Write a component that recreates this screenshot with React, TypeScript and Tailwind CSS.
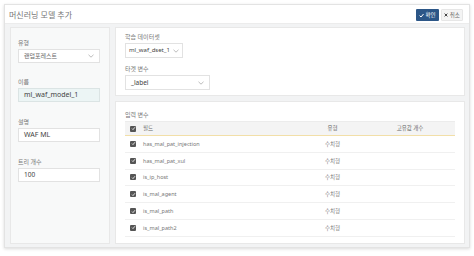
import React from "react";

const font = { fontFamily: '"Noto Sans", "Noto Sans CJK KR", sans-serif' };

function Chevron() {
  return (
    <svg width="6" height="4" viewBox="0 0 6 4" className="shrink-0">
      <path d="M0.5 0.8 L3 3.2 L5.5 0.8" fill="none" stroke="#aaa" strokeWidth="0.8" />
    </svg>
  );
}

function Check() {
  return (
    <div className="w-[6px] h-[6px] bg-[#555] rounded-[1px] flex items-center justify-center">
      <svg width="5" height="5" viewBox="0 0 5 5">
        <path d="M1 2.6 L2 3.6 L4 1.2" fill="none" stroke="#fff" strokeWidth="0.8" />
      </svg>
    </div>
  );
}

function Label({ children }: { children: React.ReactNode }) {
  return <div className="text-[6px] leading-[8px] text-[#777] mb-[2px]">{children}</div>;
}

const rows = [
  "has_mal_pat_injection",
  "has_mal_pat_xul",
  "is_ip_host",
  "is_mal_agent",
  "is_mal_path",
  "is_mal_path2",
];

export default function App() {
  return (
    <div className="w-[474px] h-[256px] bg-white pt-[4px] px-[4px]" style={font}>
      <div className="h-[244px] border border-[#e3e3e3] shadow-[0_1px_3px_rgba(0,0,0,0.15)] flex flex-col bg-white">
        <div className="h-[19px] flex items-center justify-between pl-[4px] pr-[6px] border-b border-[#ececec]">
          <div className="text-[8px] text-[#777] leading-none mt-[1px]">머신러닝 모델 추가</div>
          <div className="flex gap-[2px] items-center mt-[2px]">
            <div className="h-[12px] w-[23px] bg-[#2c5687] rounded-[1px] flex items-center justify-center gap-[1px] text-white text-[5.5px]">
              <svg width="5" height="5" viewBox="0 0 5 5">
                <path d="M0.6 2.6 L2 4 L4.5 1" fill="none" stroke="#fff" strokeWidth="1" />
              </svg>
              <span>확인</span>
            </div>
            <div className="h-[12px] w-[22px] bg-[#f4f4f4] border border-[#e6e6e6] rounded-[1px] flex items-center justify-center gap-[1.5px] text-[#666] text-[5.5px]">
              <svg width="4" height="4" viewBox="0 0 4 4">
                <path d="M0.6 0.6 L3.4 3.4 M3.4 0.6 L0.6 3.4" fill="none" stroke="#444" strokeWidth="1" />
              </svg>
              <span>취소</span>
            </div>
          </div>
        </div>
        <div className="flex-1 bg-[#f2f3f4] flex gap-[5px] pl-[5px] pr-[4px] pt-[3px] pb-[3px]">
          <div className="w-[100px] bg-[#f8f9f9] border border-[#e8e8e8] pl-[7px] pt-[11px] flex flex-col">
            <Label>유형</Label>
            <div className="w-[82px] h-[14px] bg-white border border-[#e2e2e2] flex items-center justify-between px-[5px] text-[6px] text-[#666]">
              <span>랜덤포레스트</span>
              <Chevron />
            </div>
            <div className="mt-[15px]"><Label>이름</Label></div>
            <div className="w-[82px] h-[14px] bg-[#ecf5f5] border border-[#dbe4e4] flex items-center px-[5px] text-[7px] text-[#444]">
              ml_waf_model_1
            </div>
            <div className="mt-[16px]"><Label>설명</Label></div>
            <div className="w-[82px] h-[14px] bg-white border border-[#e2e2e2] flex items-center px-[5px] text-[7px] text-[#444]">
              WAF ML
            </div>
            <div className="mt-[16px]"><Label>트리 개수</Label></div>
            <div className="w-[82px] h-[14px] bg-white border border-[#e2e2e2] flex items-center px-[5px] text-[6.5px] text-[#444]">
              100
            </div>
          </div>
          <div className="flex-1 flex flex-col gap-[5px]">
            <div className="h-[69px] bg-white border border-[#e8e8e8] pl-[9px] pt-[5px] flex flex-col">
              <Label>학습 데이터셋</Label>
              <div className="w-[58px] h-[15px] bg-white border border-[#e2e2e2] flex items-center justify-between px-[3px] text-[6px] text-[#444]">
                <span>ml_waf_dset_1</span>
                <Chevron />
              </div>
              <div className="mt-[7px]"><Label>타겟 변수</Label></div>
              <div className="w-[85px] h-[15px] bg-white border border-[#e2e2e2] flex items-center justify-between px-[5px] text-[6.5px] text-[#444]">
                <span>_label</span>
                <Chevron />
              </div>
            </div>
            <div className="flex-1 bg-white border border-[#e8e8e8] pl-[9px] pr-[9px] pt-[9px] flex flex-col">
              <Label>입력 변수</Label>
              <div className="flex flex-col">
                <div className="h-[15px] bg-[#f4f4f4] border-t border-[#ececec] border-b border-b-[#f2dfa8] flex items-center text-[5.5px] text-[#666]">
                  <div className="w-[15px] flex justify-center pl-[1px]"><Check /></div>
                  <div className="flex-1 pl-[3px]">필드</div>
                  <div className="w-[65px] text-center">유형</div>
                  <div className="w-[90px] text-center">고유값 개수</div>
                </div>
                {rows.map((r) => (
                  <div key={r} className="h-[16.8px] border-b border-[#f0f0f0] flex items-center text-[5.5px] text-[#777]">
                    <div className="w-[15px] flex justify-center pl-[1px]"><Check /></div>
                    <div className="flex-1 pl-[3px]">{r}</div>
                    <div className="w-[65px] text-center">수치형</div>
                    <div className="w-[90px]"></div>
                  </div>
                ))}
              </div>
            </div>
          </div>
        </div>
      </div>
    </div>
  );
}
